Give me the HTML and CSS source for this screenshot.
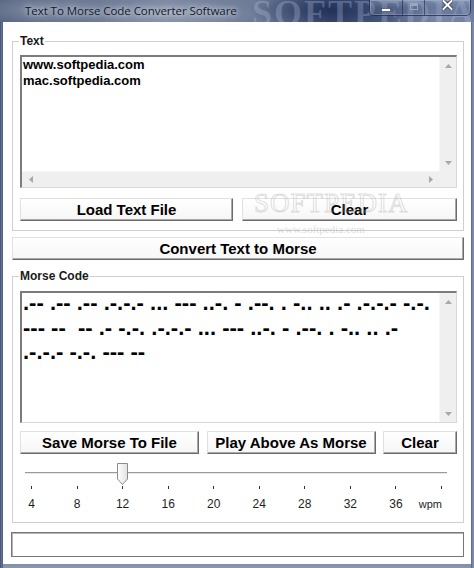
FILE: index.html
```html
<!DOCTYPE html>
<html>
<head>
<meta charset="utf-8">
<title>Text To Morse Code Converter Software</title>
<link rel="stylesheet" href="styles.css">
</head>
<body>
<div class="window">
  <div class="titlebar">
    <span class="title">Text To Morse Code Converter Software</span>
    <span class="wm-title">SOFTPEDIA</span>
    <div class="controls">
      <div class="ctl ctl-min"><svg width="10" height="4" viewBox="0 0 10 4"><rect x="0.5" y="0.5" width="9" height="3" fill="#fff" stroke="#2a3550" stroke-width="0.6"/></svg></div>
      <div class="ctl ctl-max"><svg width="8" height="7" viewBox="0 0 8 7"><rect x="0.5" y="0.5" width="7" height="6" fill="none" stroke="#9aa6bb" stroke-width="1"/><rect x="1" y="1" width="6" height="2" fill="#9aa6bb"/></svg></div>
      <div class="ctl ctl-close"><svg width="11" height="10" viewBox="0 0 11 10"><path d="M1.5 1 L9.5 9 M9.5 1 L1.5 9" stroke="#2a3550" stroke-width="3.4" stroke-linecap="square"/><path d="M1.5 1 L9.5 9 M9.5 1 L1.5 9" stroke="#fff" stroke-width="2" stroke-linecap="square"/></svg></div>
    </div>
  </div>
  <div class="client">
    <fieldset class="group group-text">
      <legend>Text</legend>
      <div class="textbox tb-text">
        <div class="tb-content text-input">www.softpedia.com<br>mac.softpedia.com</div>
        <div class="vscroll">
          <span class="sb-btn"><svg width="7" height="4" viewBox="0 0 7 4"><path d="M0 4 L3.5 0 L7 4 Z" fill="#a8a8a8"/></svg></span>
          <span class="sb-btn"><svg width="7" height="4" viewBox="0 0 7 4"><path d="M0 0 L3.5 4 L7 0 Z" fill="#a8a8a8"/></svg></span>
        </div>
        <div class="hscroll">
          <span class="sb-btn"><svg width="4" height="7" viewBox="0 0 4 7"><path d="M4 0 L0 3.5 L4 7 Z" fill="#a8a8a8"/></svg></span>
          <span class="sb-btn"><svg width="4" height="7" viewBox="0 0 4 7"><path d="M0 0 L4 3.5 L0 7 Z" fill="#a8a8a8"/></svg></span>
        </div>
        <div class="sb-corner"></div>
      </div>
      <div class="btnrow btnrow-2">
        <button class="btn">Load Text File</button>
        <button class="btn">Clear</button>
      </div>
    </fieldset>

    <button class="btn btn-wide">Convert Text to Morse</button>

    <fieldset class="group group-morse">
      <legend>Morse Code</legend>
      <div class="textbox tb-morse">
        <div class="tb-content morse-text">.-- .-- .-- .-.-.- ... --- ..-. - .--. . -.. .. .- .-.-.- -.-.
--- --  -- .- -.-. .-.-.- ... --- ..-. - .--. . -.. .. .-
.-.-.- -.-. --- --</div>
        <div class="vscroll">
          <span class="sb-btn"><svg width="7" height="4" viewBox="0 0 7 4"><path d="M0 4 L3.5 0 L7 4 Z" fill="#a8a8a8"/></svg></span>
          <span class="sb-btn"><svg width="7" height="4" viewBox="0 0 7 4"><path d="M0 0 L3.5 4 L7 0 Z" fill="#a8a8a8"/></svg></span>
        </div>
      </div>
      <div class="btnrow btnrow-3">
        <button class="btn">Save Morse To File</button>
        <button class="btn">Play Above As Morse</button>
        <button class="btn">Clear</button>
      </div>
      <div class="slider">
        <div class="track"></div>
        <svg class="thumb" width="11" height="22" viewBox="0 0 11 22"><defs><linearGradient id="tg" x1="0" y1="0" x2="1" y2="0"><stop offset="0" stop-color="#ffffff"/><stop offset="1" stop-color="#e2e2e2"/></linearGradient></defs><path d="M0.5 0.5 H10.5 V16 L5.5 21.5 L0.5 16 Z" fill="url(#tg)" stroke="#8c8c8c" stroke-width="1"/></svg>
      </div>
      <div class="ticks">
        <i></i><i></i><i></i><i></i><i></i><i></i><i></i><i></i><i></i><i></i>
      </div>
      <div class="labels">
        <span>4</span><span>8</span><span>12</span><span>16</span><span>20</span><span>24</span><span>28</span><span>32</span><span>36</span><span class="wpm">wpm</span>
      </div>
    </fieldset>

    <div class="status"></div>

    <span class="wm-big">SOFTPEDIA</span>
    <span class="wm-small">www.softpedia.com</span>
  </div>
</div>
</body>
</html>
```

FILE: styles.css
```css
* { box-sizing: border-box; }

html, body {
  margin: 0;
  padding: 0;
}

body {
  width: 474px;
  height: 568px;
  overflow: hidden;
  background: #4a5a7c;
  font-family: "Liberation Sans", Arial, sans-serif;
}

.window {
  width: 474px;
  height: 568px;
  display: flex;
  flex-direction: column;
  background:
    linear-gradient(90deg, #3e4e70 0, #6a7a98 2px, #3e4e70 3px, transparent 3px, transparent 471px, #53648a 471px, #8090ae 473px),
    linear-gradient(180deg, #5d6c8a 0, #4c5d80 50%, #5a76a6 97%, #8a98a8 100%);
}

/* ---------- title bar ---------- */
.titlebar {
  position: relative;
  height: 22px;
  flex: none;
  display: flex;
  justify-content: space-between;
  align-items: flex-start;
  padding: 0 3px 0 25px;
  overflow: hidden;
  background:
    radial-gradient(ellipse 70px 16px at 40px 10px, rgba(150, 160, 185, 0.55), transparent),
    radial-gradient(ellipse 90px 14px at 170px 14px, rgba(170, 178, 195, 0.5), transparent),
    radial-gradient(ellipse 80px 20px at 330px 10px, rgba(20, 35, 75, 0.7), transparent),
    radial-gradient(ellipse 50px 14px at 440px 18px, rgba(160, 170, 195, 0.5), transparent),
    linear-gradient(90deg, #55647f 0, #7d8aa2 35%, #6c7a95 55%, #3f5076 70%, #64759a 100%);
}

.title {
  position: relative;
  z-index: 1;
  margin-top: 3px;
  font-family: "Open Sans", "Noto Sans", sans-serif;
  font-size: 11.6px;
  line-height: 16px;
  color: #15182a;
  text-shadow: 0 0 5px rgba(235, 240, 250, 0.9), 0 0 9px rgba(235, 240, 250, 0.6);
  letter-spacing: -0.1px;
}

.wm-title {
  position: absolute;
  left: 252px;
  top: -8px;
  font-family: "Liberation Serif", serif;
  font-weight: bold;
  font-size: 36px;
  letter-spacing: 2px;
  color: rgba(190, 205, 235, 0.28);
  white-space: nowrap;
}

.controls {
  position: relative;
  z-index: 1;
  display: flex;
  height: 16px;
  border: 1px solid rgba(30, 40, 70, 0.75);
  border-top: none;
  border-radius: 0 0 5px 5px;
  overflow: hidden;
  box-shadow: inset 0 0 0 1px rgba(220, 230, 245, 0.35);
}

.ctl {
  height: 15px;
  display: flex;
  align-items: center;
  justify-content: center;
  background: linear-gradient(180deg, rgba(190, 200, 220, 0.35), rgba(120, 135, 165, 0.25) 50%, rgba(90, 105, 140, 0.3));
}

.ctl + .ctl { border-left: 1px solid rgba(30, 40, 70, 0.6); }

.ctl-min { width: 32px; padding-top: 5px; }
.ctl-max { width: 22px; padding-bottom: 3px; }
.ctl-close { width: 46px; padding-bottom: 5px; }

/* ---------- client ---------- */
.client {
  position: relative;
  flex: 1;
  margin: 0 3px 4px 3px;
  background: #ffffff;
  padding: 0 7px 0 9px;
  display: flex;
  flex-direction: column;
  overflow: hidden;
}

.group {
  margin: 0;
  min-width: 0;
  border: 1px solid #cfcfcf;
  box-shadow: 1px 1px 0 #ffffff;
  padding: 7px 6px 9px 7px;
}

.group legend {
  padding: 0 1px;
  margin-left: -1px;
  font-weight: bold;
  font-size: 12px;
  line-height: 14px;
  color: #1a1a1a;
}

.group-text { margin-top: 12px; }
.group-morse { margin-top: 9px; padding-top: 8px; padding-bottom: 11px; }

/* ---------- text boxes ---------- */
.textbox {
  display: grid;
  grid-template-columns: 1fr 17px;
  border-top: 2px solid #7c7c7c;
  border-left: 2px solid #7c7c7c;
  border-right: 1px solid #d8d8d8;
  border-bottom: 1px solid #d8d8d8;
  background: #ffffff;
}

.tb-text {
  height: 133px;
  grid-template-rows: 1fr 16px;
}

.tb-morse {
  height: 132px;
  grid-template-rows: 1fr;
}

.tb-content {
  padding-left: 1px;
  color: #000;
  overflow: hidden;
}

.text-input {
  font-weight: bold;
  font-size: 13px;
  line-height: 16px;
}

.morse-text {
  font-weight: bold;
  font-size: 22px;
  line-height: 24.5px;
  white-space: pre;
  margin-top: -2px;
}

.vscroll {
  display: flex;
  flex-direction: column;
  justify-content: space-between;
  background: #efefef;
  border-left: 1px solid #f7f7f7;
}

.hscroll {
  display: flex;
  justify-content: space-between;
  background: #efefef;
  border-top: 1px solid #f7f7f7;
}

.sb-btn {
  width: 17px;
  height: 17px;
  display: flex;
  align-items: center;
  justify-content: center;
}

.hscroll .sb-btn { height: 15px; }

.sb-corner { background: #f0f0f0; }

/* ---------- buttons ---------- */
.btn {
  height: 23px;
  margin: 0;
  padding: 0;
  font-family: "Liberation Sans", Arial, sans-serif;
  font-weight: bold;
  font-size: 15px;
  color: #000;
  background: linear-gradient(180deg, #ffffff, #f6f6f6);
  border: 1px solid;
  border-color: #e1e1e1 #6b6b6b #6b6b6b #e1e1e1;
  box-shadow: inset -1px -1px 0 #a9a9a9;
}

.btnrow { display: grid; margin-top: 10px; }
.btnrow-2 { grid-template-columns: 213px 215px; justify-content: space-between; }
.btnrow-3 { grid-template-columns: 179px 169px 74px; column-gap: 8px; column-gap: 7px; margin-top: 8px; justify-content: space-between; }

.btn-wide { margin-top: 6px; width: 100%; }

/* ---------- slider ---------- */
.slider {
  position: relative;
  height: 21px;
  margin: 9px 10px 0 5px;
  padding-top: 9px;
}

.track {
  height: 2px;
  border-top: 1px solid #9a9a9a;
  border-bottom: 1px solid #e8e8e8;
}

.thumb {
  position: absolute;
  left: 92px;
  top: 0;
}

.ticks {
  display: flex;
  justify-content: space-between;
  height: 3px;
  margin: 2px 15px 0 11px;
}

.ticks i {
  width: 1px;
  height: 3px;
  background: #303030;
}

.labels {
  display: flex;
  justify-content: space-between;
  margin: 8px 15px 0 11px;
  height: 14px;
  font-size: 12px;
  line-height: 14px;
  color: #1e1e1e;
}

.labels span {
  width: 1px;
  display: flex;
  justify-content: center;
  white-space: nowrap;
}

.labels .wpm {
  justify-content: flex-end;
  font-size: 11px;
}

/* ---------- status ---------- */
.status {
  margin-top: 9px;
  margin-left: -1px;
  height: 25px;
  border: 1px solid #777777;
  box-shadow: inset 1px 1px 0 #b5b5b5;
  background: #ffffff;
}

/* ---------- watermarks ---------- */
.wm-big {
  position: absolute;
  left: 251px;
  top: 166px;
  font-family: "Liberation Serif", serif;
  font-size: 27px;
  letter-spacing: 1px;
  color: rgba(255, 255, 255, 0.0);
  -webkit-text-stroke: 1px rgba(160, 160, 160, 0.35);
  white-space: nowrap;
  pointer-events: none;
}

.wm-small {
  position: absolute;
  left: 274px;
  top: 201px;
  font-family: "Liberation Serif", serif;
  font-size: 11px;
  color: rgba(150, 150, 150, 0.35);
  white-space: nowrap;
  pointer-events: none;
}
```
